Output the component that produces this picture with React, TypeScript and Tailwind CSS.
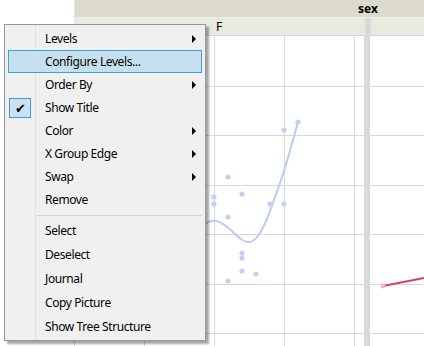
import React from "react";

type Item = { label: string; sub?: boolean; checked?: boolean; active?: boolean };

const top: Item[] = [
  { label: "Levels", sub: true },
  { label: "Configure Levels...", active: true },
  { label: "Order By", sub: true },
  { label: "Show Title", checked: true },
  { label: "Color", sub: true },
  { label: "X Group Edge", sub: true },
  { label: "Swap", sub: true },
  { label: "Remove" },
];

const bottom: Item[] = [
  { label: "Select" },
  { label: "Deselect" },
  { label: "Journal" },
  { label: "Copy Picture" },
  { label: "Show Tree Structure" },
];

const points: [number, number][] = [
  [284, 95],
  [298, 87],
  [228, 142],
  [214, 162],
  [214, 169],
  [242, 159],
  [228, 182],
  [270, 169],
  [284, 169],
  [242, 218],
  [242, 223],
  [242, 236],
  [256, 239],
  [228, 246],
];

function MenuRow({ item, h }: { item: Item; h: string }) {
  return (
    <div
      className={`relative mx-[3px] flex items-center ${h} ${
        item.active ? "bg-[#c7e0f0] outline outline-1 -outline-offset-1 outline-[#3ea2dc]" : ""
      }`}
    >
      {item.checked && (
        <div className="absolute left-[1px] top-[2px] flex h-[20px] w-[22px] items-center justify-center border border-[#3c9ad8] bg-[#c9e2f3] text-[13px] leading-none text-black">
          ✔
        </div>
      )}
      <span className="pl-[37px] tracking-[-0.4px] text-black">{item.label}</span>
      {item.sub && (
        <span className="absolute right-[6px] top-1/2 h-0 w-0 -translate-y-1/2 border-y-[4px] border-l-[4px] border-y-transparent border-l-black" />
      )}
    </div>
  );
}

export default function App() {
  return (
    <div className="relative h-[346px] w-[424px] overflow-hidden bg-white font-['Noto_Sans',sans-serif] text-[12px]">
      {/* header bands */}
      <div className="flex h-[35px]">
        <div className="w-[74px] bg-white" />
        <div className="flex flex-1 flex-col border-l border-[#e6e6e6]">
          <div className="flex h-[17px] items-center bg-[#dcdbcc]">
            <span className="ml-[283px] text-[12px] font-bold leading-none text-black">sex</span>
          </div>
          <div className="flex h-[18px] border-t border-[#eeeee6] bg-[#e9e9df]">
            <span className="ml-[141px] pt-[1px] text-[12px] leading-[16px] text-black">F</span>
            <div className="ml-[143px] w-[6px] bg-[#d9d9d9]" />
          </div>
        </div>
      </div>

      {/* plot */}
      <svg width="424" height="311" className="block">
        <line x1="74" y1="0.5" x2="424" y2="0.5" stroke="#d4d4d4" />
        {[51, 100, 150, 199, 249, 298].map((y) => (
          <line key={y} x1="74" y1={y + 0.5} x2="424" y2={y + 0.5} stroke="#d9d9d9" />
        ))}
        {[74, 144, 214, 284, 354].map((x) => (
          <line key={x} x1={x + 0.5} y1="0" x2={x + 0.5} y2="311" stroke="#d9d9d9" />
        ))}
        <rect x="364" y="0" width="6" height="311" fill="#d9d9d9" />
        <path
          d="M205,189 C212,184 218,185 226,191 C236,199 242,208 250,207 C262,205 272,170 280,148 C288,125 293,105 298,87"
          fill="none"
          stroke="#bccbf3"
          strokeWidth="2"
        />
        {points.map(([x, y], i) => (
          <circle key={i} cx={x} cy={y} r="2.6" fill="#c2d0f4" />
        ))}
        <line x1="383" y1="251" x2="424" y2="243" stroke="#d9405a" strokeWidth="2" />
        <circle cx="383" cy="251" r="2.4" fill="#f2b4bd" />
      </svg>

      {/* context menu */}
      <div className="absolute left-[4px] top-[24px] w-[202px] border border-[#979797] bg-[#f0f0f0] pb-[1px] pt-[2px] shadow-[3px_3px_2px_rgba(0,0,0,0.35)]">
        <div className="absolute bottom-0 left-[30px] top-0 w-px bg-[#e2e2e2]" />
        {top.map((it) => (
          <MenuRow key={it.label} item={it} h="h-[23px]" />
        ))}
        <div className="flex h-[8px] items-center pl-[32px] pr-[3px]">
          <div className="h-px w-full bg-[#d7d7d7]" />
        </div>
        {bottom.map((it) => (
          <MenuRow key={it.label} item={it} h="h-[24px]" />
        ))}
      </div>
    </div>
  );
}
